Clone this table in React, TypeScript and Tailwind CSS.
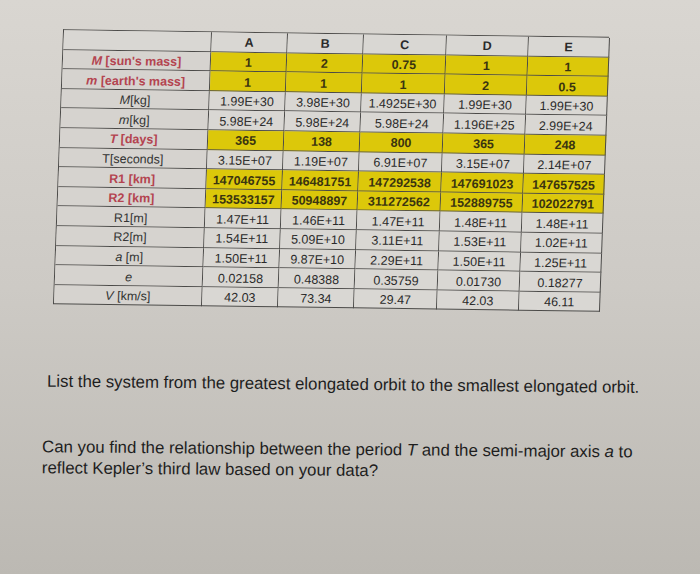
import React from 'react'

type Row = {
  label: React.ReactNode
  values: string[]
  hl?: boolean
}

const rows: Row[] = [
  { label: <><i>M</i> [sun's mass]</>, values: ['1', '2', '0.75', '1', '1'], hl: true },
  { label: <><i>m</i> [earth's mass]</>, values: ['1', '1', '1', '2', '0.5'], hl: true },
  { label: <><i>M</i>[kg]</>, values: ['1.99E+30', '3.98E+30', '1.4925E+30', '1.99E+30', '1.99E+30'] },
  { label: <><i>m</i>[kg]</>, values: ['5.98E+24', '5.98E+24', '5.98E+24', '1.196E+25', '2.99E+24'] },
  { label: <><i>T</i> [days]</>, values: ['365', '138', '800', '365', '248'], hl: true },
  { label: 'T[seconds]', values: ['3.15E+07', '1.19E+07', '6.91E+07', '3.15E+07', '2.14E+07'] },
  { label: 'R1 [km]', values: ['147046755', '146481751', '147292538', '147691023', '147657525'], hl: true },
  { label: 'R2 [km]', values: ['153533157', '50948897', '311272562', '152889755', '102022791'], hl: true },
  { label: 'R1[m]', values: ['1.47E+11', '1.46E+11', '1.47E+11', '1.48E+11', '1.48E+11'] },
  { label: 'R2[m]', values: ['1.54E+11', '5.09E+10', '3.11E+11', '1.53E+11', '1.02E+11'] },
  { label: <><i>a</i> [m]</>, values: ['1.50E+11', '9.87E+10', '2.29E+11', '1.50E+11', '1.25E+11'] },
  { label: <i>e</i>, values: ['0.02158', '0.48388', '0.35759', '0.01730', '0.18277'] },
  { label: <><i>V</i> [km/s]</>, values: ['42.03', '73.34', '29.47', '42.03', '46.11'] },
]

const cell =
  'flex h-[19.6px] items-center justify-center pt-[3px] border-r border-b border-[#4b4a48] whitespace-nowrap'

export default function App() {
  return (
    <div className="flex h-[574px] w-[700px] flex-col overflow-hidden bg-gradient-to-b from-[#d9d6d1] via-[#cdcac5] to-[#bcb9b3] font-['Liberation_Sans',sans-serif] text-[#2a2a2a]">
      <div className="ml-[58px] mt-[33px] w-[546px] rotate-[0.8deg] skew-x-[-1.3deg]">
        <div className="grid grid-cols-[148px_76px_76px_83px_82px_81px] border-t border-l border-[#4b4a48] text-[12.5px]">
          <div className={`${cell} bg-[#d9d7d3]`} />
          {['A', 'B', 'C', 'D', 'E'].map((h) => (
            <div key={h} className={`${cell} bg-[#d9d7d3] font-bold`}>
              {h}
            </div>
          ))}
          {rows.map((r, i) => (
            <React.Fragment key={i}>
              <div
                className={`${cell} bg-[#d6d3cf] ${r.hl ? 'font-bold text-[#b44450]' : 'text-[#333]'}`}
              >
                <span>{r.label}</span>
              </div>
              {r.values.map((v, j) => (
                <div
                  key={j}
                  className={`${cell} ${r.hl ? 'bg-[#dcc80a] font-bold text-[#3a3410]' : 'bg-[#d9d7d3]'}`}
                >
                  {v}
                </div>
              ))}
            </React.Fragment>
          ))}
        </div>
      </div>

      <p className="ml-[47px] mt-[66px] w-[640px] rotate-[0.6deg] text-[16.8px] leading-[22px] text-[#1e1e1e]">
        List the system from the greatest elongated orbit to the smallest elongated orbit.
      </p>

      <p className="ml-[42px] mt-[43px] w-[640px] rotate-[0.5deg] text-[16.8px] leading-[21px] text-[#1e1e1e]">
        Can you find the relationship between the period <i>T</i> and the semi-major axis <i>a</i> to
        <br />
        reflect Kepler’s third law based on your data?
      </p>
    </div>
  )
}
